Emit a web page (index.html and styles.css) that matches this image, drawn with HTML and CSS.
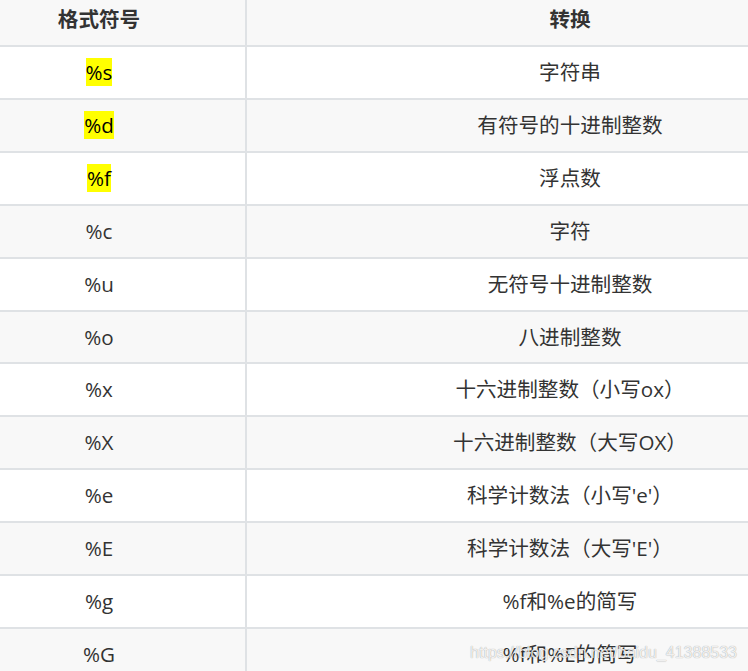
FILE: index.html
```html
<!DOCTYPE html>
<html lang="zh-CN">
<head>
<meta charset="utf-8">
<title>格式符号</title>
<link rel="stylesheet" href="styles.css">
</head>
<body>
<div class="viewport">
  <table class="fmt-table">
    <thead>
      <tr><th class="col-a">格式符号</th><th class="col-b">转换</th></tr>
    </thead>
    <tbody>
      <tr><td class="col-a"><mark class="hl">%s</mark></td><td class="col-b">字符串</td></tr>
      <tr><td class="col-a"><mark class="hl">%d</mark></td><td class="col-b">有符号的十进制整数</td></tr>
      <tr><td class="col-a"><mark class="hl">%f</mark></td><td class="col-b">浮点数</td></tr>
      <tr><td class="col-a">%c</td><td class="col-b">字符</td></tr>
      <tr><td class="col-a">%u</td><td class="col-b">无符号十进制整数</td></tr>
      <tr><td class="col-a">%o</td><td class="col-b">八进制整数</td></tr>
      <tr><td class="col-a">%x</td><td class="col-b">十六进制整数（小写ox）</td></tr>
      <tr><td class="col-a">%X</td><td class="col-b">十六进制整数（大写OX）</td></tr>
      <tr><td class="col-a">%e</td><td class="col-b">科学计数法（小写'e'）</td></tr>
      <tr><td class="col-a">%E</td><td class="col-b">科学计数法（大写'E'）</td></tr>
      <tr><td class="col-a">%g</td><td class="col-b">%f和%e的简写</td></tr>
      <tr><td class="col-a">%G</td><td class="col-b">%f和%E的简写</td></tr>
    </tbody>
  </table>
  <div class="watermark">https://blog.csdn.net/baidu_41388533</div>
</div>
</body>
</html>
```
FILE: styles.css
```css
html, body {
  margin: 0;
  padding: 0;
  background: #ffffff;
}
.viewport {
  position: relative;
  width: 748px;
  height: 671px;
  overflow: hidden;
}
.fmt-table {
  border-collapse: separate;
  border-spacing: 0;
  margin-left: -47px;
  margin-top: -6px;
  table-layout: fixed;
  width: 940px;
  font-family: "Open Sans", "Noto Sans CJK SC", sans-serif;
  font-size: 20.6px;
  color: #333333;
}
.fmt-table th,
.fmt-table td {
  padding: 0;
  height: 50.9px;
  line-height: 50.9px;
  text-align: center;
  border-bottom: 2px solid #dfe2e5;
  white-space: nowrap;
}
.fmt-table td {
  padding-top: 1px;
  height: 49.9px;
  line-height: 49.9px;
}
.fmt-table th {
  height: 51px;
  line-height: 51px;
  font-weight: 700;
}
.col-a {
  width: 292px;
  border-right: 2px solid #dfe2e5;
}
.col-b {
  width: 646px;
}
.fmt-table thead tr,
.fmt-table tbody tr:nth-child(2n) {
  background: #f8f8f8;
}
.hl {
  background: #ffff00;
  color: #000000;
  padding: 0;
}
.watermark {
  position: absolute;
  right: 11px;
  bottom: 8px;
  font-family: "Liberation Sans", Arial, sans-serif;
  font-size: 16px;
  line-height: 20px;
  color: rgba(255, 255, 255, 0.85);
  text-shadow: 0 0 1px rgba(0, 0, 0, 0.3), 0 0 1px rgba(0, 0, 0, 0.15);
  white-space: nowrap;
}
```
